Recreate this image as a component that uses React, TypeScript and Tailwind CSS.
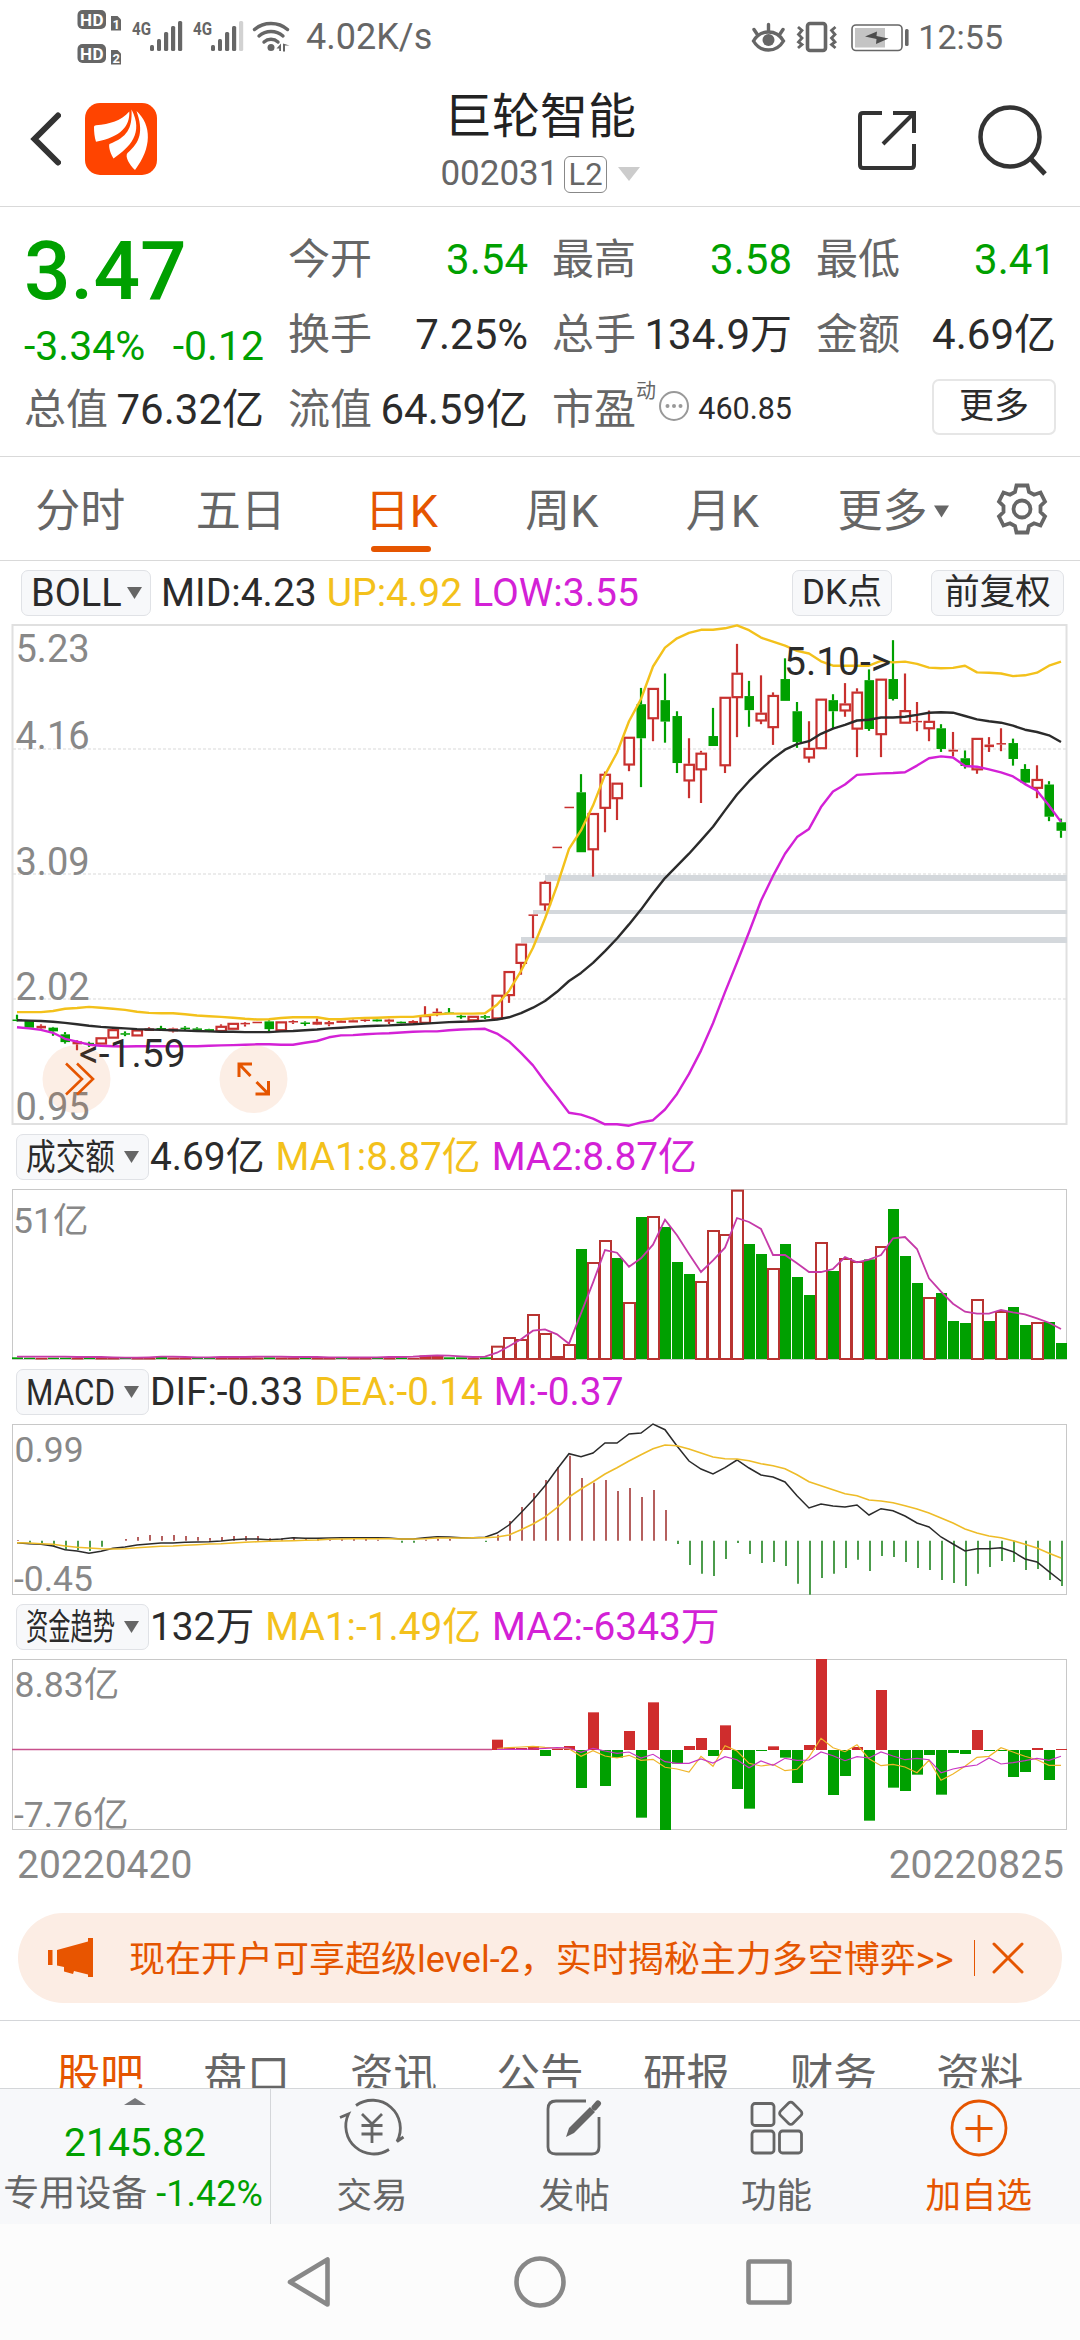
import type { ReactNode } from 'react'
import clsx from 'clsx'

const GREEN = '#00a000'
const RED = '#c8312f'
const YELLOW = '#f3c11b'
const PURPLE = '#d321d6'
const DARK = '#2b2b2b'

// x of the centre of the n-th trading day, 12px per day
const cx = (i: number) => 17 + i * 12

// price samples: 200 is the top of the plot, 1551 the bottom
const py = (v: number) => ((v - 200) * 500) / 1351 + 1
// indicator samples are stored in thirds of a pixel
const third = (base: number) => (v: number) => (v - base) / 3

const linePoints = (data: number[], y: (v: number) => number, start = 0) =>
  data.map((v, i) => `${cx(i + start)},${y(v).toFixed(1)}`).join(' ')

// [up?, high, body top, body bottom, low]
type Candle = [number, number, number, number, number]

const candles: Candle[] = [
  [0, 1253, 1266, 1270, 1271], [0, 1270, 1270, 1288, 1288], [1, 1279, 1283, 1290, 1293], [0, 1286, 1288, 1298, 1310],
  [0, 1300, 1306, 1327, 1331], [1, 1322, 1325, 1333, 1349], [0, 1326, 1329, 1332, 1340], [1, 1314, 1314, 1331, 1331],
  [1, 1292, 1292, 1315, 1315], [0, 1298, 1303, 1306, 1311], [1, 1293, 1293, 1309, 1309], [1, 1287, 1290, 1297, 1297],
  [0, 1283, 1289, 1292, 1297], [1, 1288, 1290, 1298, 1301], [0, 1284, 1288, 1291, 1295], [0, 1287, 1290, 1293, 1296],
  [0, 1291, 1292, 1298, 1300], [1, 1279, 1283, 1297, 1297], [1, 1275, 1275, 1291, 1291], [1, 1273, 1275, 1279, 1285],
  [1, 1272, 1272, 1275, 1275], [0, 1268, 1271, 1292, 1297], [1, 1271, 1271, 1295, 1295], [1, 1268, 1270, 1274, 1278],
  [0, 1271, 1274, 1277, 1283], [1, 1263, 1272, 1280, 1281], [1, 1270, 1273, 1279, 1284], [1, 1268, 1269, 1275, 1275],
  [1, 1266, 1268, 1274, 1274], [1, 1264, 1266, 1270, 1272], [0, 1265, 1266, 1271, 1272], [1, 1264, 1266, 1272, 1278],
  [0, 1271, 1272, 1275, 1276], [1, 1268, 1270, 1277, 1277], [1, 1230, 1254, 1275, 1275], [1, 1236, 1245, 1249, 1257],
  [0, 1235, 1247, 1250, 1250], [0, 1253, 1256, 1259, 1264], [1, 1256, 1256, 1268, 1268], [0, 1254, 1257, 1260, 1265],
  [1, 1199, 1199, 1263, 1263], [1, 1135, 1135, 1200, 1221], [1, 1061, 1061, 1113, 1145], [1, 982, 982, 986, 1046],
  [1, 891, 894, 955, 972], [1, 799, 799, 803, 803], [1, 691, 691, 695, 695], [0, 603, 652, 814, 814],
  [1, 708, 708, 806, 880], [1, 596, 602, 694, 760], [1, 626, 626, 668, 727], [1, 502, 502, 577, 595],
  [0, 370, 414, 506, 638], [1, 370, 370, 452, 514], [0, 331, 403, 461, 518], [0, 433, 446, 573, 600],
  [1, 506, 575, 620, 668], [1, 540, 545, 590, 681], [0, 424, 500, 527, 527], [1, 394, 394, 579, 600],
  [1, 251, 329, 395, 503], [0, 351, 392, 430, 475], [1, 336, 437, 458, 468], [1, 382, 389, 476, 524],
  [0, 290, 346, 405, 405], [0, 408, 433, 516, 532], [1, 460, 532, 558, 572], [1, 399, 399, 533, 533],
  [0, 387, 403, 433, 480], [1, 357, 412, 431, 448], [1, 371, 380, 480, 557], [0, 320, 349, 481, 486],
  [1, 345, 345, 495, 557], [0, 241, 346, 400, 404], [1, 331, 430, 464, 464], [1, 408, 459, 463, 487],
  [1, 431, 459, 479, 514], [0, 468, 479, 535, 543], [1, 489, 537, 542, 555], [0, 539, 560, 581, 588],
  [1, 505, 505, 590, 602], [1, 503, 523, 530, 543], [1, 479, 519, 523, 541], [0, 507, 519, 562, 580],
  [0, 576, 589, 626, 632], [1, 579, 616, 640, 668], [0, 622, 631, 718, 730], [0, 723, 733, 756, 775],
]

const bollUp = [
  1246, 1246, 1246, 1243, 1237, 1235, 1232, 1234, 1237, 1240, 1245, 1248, 1249, 1249, 1252, 1255, 1257, 1259, 1261, 1264,
  1266, 1265, 1262, 1260, 1260, 1260, 1265, 1265, 1263, 1262, 1261, 1260, 1259, 1259, 1255, 1252, 1250, 1250, 1250, 1249,
  1226, 1189, 1135, 1072, 993, 905, 805, 755, 688, 605, 545, 460, 400, 312, 261, 236, 221, 213, 213, 209,
  201, 214, 234, 245, 256, 270, 277, 298, 310, 310, 310, 310, 297, 301, 299, 305, 315, 317, 316, 310,
  328, 329, 331, 338, 336, 329, 310, 299,
]

const bollMid = [
  1268, 1269, 1270, 1272, 1275, 1279, 1283, 1286, 1288, 1290, 1292, 1293, 1294, 1295, 1296, 1297, 1298, 1299, 1299, 1300,
  1300, 1300, 1298, 1297, 1295, 1293, 1290, 1288, 1286, 1284, 1283, 1282, 1280, 1279, 1277, 1275, 1273, 1272, 1271, 1269,
  1266, 1260, 1249, 1234, 1216, 1191, 1162, 1140, 1113, 1081, 1047, 1009, 969, 925, 884, 851, 818, 782, 745, 701,
  658, 622, 590, 561, 537, 522, 514, 494, 480, 470, 458, 456, 450, 450, 448, 443, 437, 436, 437, 446,
  455, 460, 464, 472, 483, 489, 498, 516,
]

const bollLow = [
  1287, 1290, 1294, 1302, 1318, 1326, 1334, 1337, 1338, 1339, 1338, 1338, 1338, 1338, 1338, 1338, 1337, 1336, 1335, 1334,
  1333, 1333, 1334, 1334, 1329, 1324, 1314, 1309, 1308, 1306, 1304, 1303, 1301, 1299, 1298, 1298, 1295, 1293, 1292, 1291,
  1304, 1325, 1356, 1390, 1434, 1475, 1518, 1523, 1534, 1549, 1549, 1553, 1544, 1538, 1509, 1467, 1413, 1350, 1276, 1192,
  1112, 1030, 945, 878, 818, 773, 751, 692, 650, 631, 605, 603, 601, 600, 598, 580, 560, 555, 558, 581,
  583, 590, 598, 609, 630, 648, 688, 732,
]

// turnover bars, positive = up day, negative = down day
const turnover = [
  -709, -710, 709, -710, -710, 709, -709, 708, 708, -709, 709, 709, -708, 708, 708, -709, -710, 709, 708, 708,
  708, -709, 708, 708, -709, 708, 709, -709, 708, 708, -709, 709, -709, 709, 702, 702, -709, -709, 708, -709,
  674, 648, 654, 579, 636, 705, 669, -384, 423, 357, -411, 543, -288, 285, -318, -423, -459, 480, 327, 339,
  206, -369, -399, 441, -369, -468, -522, 363, -450, 411, 420, -415, 375, -264, -405, -486, 528, -516, -600, -606,
  534, -600, 570, -558, -612, 603, -603, -666,
]

const turnoverMa = [
  707, 707, 707, 707, 707, 708, 708, 708, 709, 710, 710, 709, 707, 707, 708, 709, 709, 708, 708, 708,
  707, 707, 707, 708, 708, 708, 709, 709, 709, 709, 709, 708, 708, 707, 705, 703, 704, 706, 708, 707,
  695, 676, 655, 629, 625, 640, 668, 577, 485, 387, 395, 437, 412, 371, 296, 343, 399, 453, 418, 380,
  291, 303, 324, 402, 402, 427, 453, 453, 444, 408, 424, 416, 402, 352, 348, 384, 472, 512, 548, 572,
  578, 578, 567, 574, 580, 592, 605, 624,
]

const macdBars = [
  1257, 1265, 1266, 1276, 1286, 1287, 1290, 1277, 1259, 1254, 1248, 1242, 1245, 1242, 1245, 1248, 1251, 1248, 1245, 1245,
  1245, 1252, 1254, 1248, 1253, 1254, 1254, 1254, 1254, 1254, 1256, 1259, 1265, 1265, 1256, 1253, 1254, 1259, 1259, 1263,
  1241, 1200, 1158, 1116, 1077, 1038, 1004, 1071, 1085, 1077, 1110, 1101, 1128, 1107, 1167, 1269, 1332, 1358, 1365, 1314,
  1266, 1299, 1326, 1323, 1335, 1388, 1421, 1371, 1358, 1341, 1316, 1350, 1305, 1308, 1323, 1341, 1347, 1377, 1386, 1395,
  1358, 1338, 1320, 1323, 1347, 1344, 1377, 1395,
]

const macdDif = [
  1265, 1268, 1270, 1275, 1286, 1290, 1297, 1291, 1282, 1278, 1272, 1269, 1266, 1266, 1264, 1263, 1262, 1260, 1256, 1254,
  1254, 1256, 1254, 1250, 1252, 1252, 1251, 1250, 1250, 1250, 1250, 1251, 1254, 1254, 1250, 1247, 1248, 1250, 1250, 1249,
  1236, 1212, 1175, 1137, 1094, 1045, 998, 1007, 996, 966, 966, 939, 936, 909, 926, 975, 1020, 1044, 1059, 1040,
  1017, 1041, 1062, 1068, 1083, 1124, 1161, 1149, 1155, 1158, 1152, 1182, 1163, 1169, 1185, 1206, 1218, 1248, 1269, 1290,
  1283, 1283, 1280, 1292, 1314, 1323, 1352, 1380,
]

const macdDea = [
  1265, 1266, 1268, 1270, 1275, 1279, 1281, 1283, 1284, 1283, 1280, 1278, 1276, 1275, 1273, 1271, 1269, 1268, 1266, 1264,
  1262, 1261, 1260, 1259, 1258, 1257, 1255, 1254, 1253, 1253, 1253, 1253, 1254, 1254, 1253, 1251, 1251, 1251, 1250, 1250,
  1248, 1242, 1226, 1209, 1188, 1160, 1128, 1104, 1082, 1059, 1040, 1020, 1001, 983, 972, 974, 984, 996, 1008, 1013,
  1014, 1019, 1028, 1034, 1043, 1061, 1082, 1094, 1106, 1118, 1124, 1137, 1140, 1145, 1154, 1164, 1176, 1191, 1206, 1224,
  1236, 1245, 1250, 1259, 1270, 1281, 1297, 1311,
]

// money flow starts to move on day 40, before that it is flat
const flowBars = [
  446, 470, 471, 466, 495, 473, 465, 591, 364, 585, 500, 420, 680, 334, 717, 518, 465, 441, 495, 403,
  594, 653, 480, 466, 500, 576, 462, 204, 612, 555, 468, 689, 297, 590, 600, 551, 492, 611, 486, 489,
  417, 480, 480, 558, 543, 471, 567, 474,
]

const flowMa1 = [
  473, 470, 468, 466, 469, 471, 473, 496, 479, 495, 501, 493, 508, 505, 529, 534, 543, 496, 526, 464,
  480, 517, 525, 520, 539, 535, 498, 442, 470, 482, 461, 503, 524, 520, 528, 545, 508, 568, 549, 526,
  499, 496, 470, 483, 496, 506, 523, 523,
]

const flowMa2 = [
  475, 475, 475, 474, 472, 470, 471, 484, 472, 480, 487, 483, 501, 490, 512, 517, 517, 504, 516, 497,
  506, 530, 510, 523, 502, 508, 507, 483, 494, 509, 497, 501, 483, 495, 506, 502, 506, 545, 534, 527,
  522, 501, 519, 515, 509, 502, 508, 496,
]

function StatusBar() {
  return (
    <div className="flex h-[74px] items-center pr-[77px] pl-[76px] text-[36px] text-[#666]">
      <svg width="216" height="74" viewBox="76 0 216 74" fill="#666" className="shrink-0">
        {[10, 44].map((y, i) => (
          <g key={y}>
            <rect x="77.5" y={y} width="28.5" height="19" rx="5" />
            <text x="80" y={y + 15.5} fontSize="17" fontWeight="700" fill="#fff" textLength="23.5">HD</text>
            <path d={`M111 ${y + 6}h6.5l3.5 3.5v11h-10z`} />
            <text x="112.6" y={y + 18.5} fontSize="13" fontWeight="700" fill="#fff" textLength="7">{i + 1}</text>
          </g>
        ))}
        {[133, 194].map((x, i) => (
          <g key={x}>
            <text x={x - 1} y="35" fontSize="19" fontWeight="700" textLength="19" lengthAdjust="spacingAndGlyphs">4G</text>
            <rect x={x + 17} y="45" width="4" height="6" rx="1.5" />
            <rect x={x + 24} y="39" width="4" height="12" rx="1.5" />
            <rect x={x + 31} y="32" width="4.2" height="19" rx="1.5" />
            <rect x={x + 38} y="26" width="4.2" height="25" rx="1.5" />
            <rect x={x + 45} y="21" width="4.2" height="30" rx="1.5" fill={i === 1 ? '#d2d2d2' : '#666'} />
          </g>
        ))}
        <g fill="none" stroke="#666" strokeWidth="3.4" strokeLinecap="round">
          <path d="M254.5 29.5c9-8 24-8 33 0" />
          <path d="M259 36c7-6 17-6 24 0" />
          <path d="M264 42c4-3.6 10-3.6 14 0" />
        </g>
        <circle cx="271" cy="47.5" r="3.5" />
        <path d="M281 43.5v7.5h-1.8v-2.5h-2.7zM283 43.5l6.5 2h-4.5v6h-2z" />
      </svg>
      <span className="ml-[14px] leading-none">4.02K/s</span>
      <svg width="160" height="40" viewBox="752 16 160 40" fill="none" stroke="#666" className="ml-auto shrink-0">
        <g strokeWidth="3.4" strokeLinecap="round">
          <path d="M754.5 40c7-12 23-12 30 0-7 12-23 12-30 0z" />
          <path d="M769.5 23.5v6M755 28.5l3 4.5M784 28.5l-3 4.5" />
        </g>
        <circle cx="769.5" cy="39" r="6" fill="#666" stroke="none" />
        <rect x="808.5" y="22.5" width="18" height="27" rx="2.5" strokeWidth="3.6" />
        <path d="M799 26l4 3.5-3.5 4 3.5 3.5-3.5 4 3.5 2.5-4 3.5M836.5 26l-4 3.5 3.5 4-3.5 3.5 3.5 4-3.5 2.5 4 3.5" strokeWidth="2.8" />
        <rect x="853" y="24" width="50" height="25.5" rx="4" strokeWidth="1.6" />
        <rect x="856" y="27" width="30" height="19.5" fill="#c4c4c4" stroke="none" />
        <path d="M866 35.5l12-5-.5 4.5 12 2.5-12.5 5.5.5-5z" fill="#4d4d4d" stroke="none" />
        <rect x="906" y="28" width="3.6" height="17" rx="1.5" fill="#666" stroke="none" />
      </svg>
      <span className="ml-[7px] text-[34px] leading-none">12:55</span>
    </div>
  )
}

function Header() {
  return (
    <div className="relative flex h-[133px] items-center border-b border-[#d9d9d9] pr-[32px] pl-[30px]">
      <svg width="31" height="54" viewBox="0 0 31 54" className="mt-[-3px]">
        <path d="M28 3.5L4.5 27 28 50.5" fill="none" stroke="#333" strokeWidth="6" strokeLinecap="round" />
      </svg>
      <svg width="72" height="72" viewBox="0 0 72 72" className="mt-[-2px] ml-[24px]">
        <rect width="72" height="72" rx="15" fill="#ff4400" />
        <g fill="#fff">
          <path d="M9 24c0-1 1-1.5 2-1.7C25 21 36 18 44.3 8.5 45 23 36 34 11 38.8 9.5 34 9 29 9 24z" />
          <path d="M46.5 6.5C47.5 26 42 34 24.5 41c-.8 1-.5 7 4 14.5C45 44 59 30 46.5 6.5z" />
          <path d="M51.5 8c7 20 4 31-9 42-3 3.5 2 12 7.5 17C67 45 67 22 51.5 8z" />
        </g>
      </svg>
      <div className="absolute inset-x-0 top-[14px] flex flex-col items-center">
        <h1 className="text-[48px] leading-[58px] text-[#222]">巨轮智能</h1>
        <div className="mt-[9px] flex h-[38px] items-center text-[35px] leading-[38px] text-[#666]">
          002031
          <span className="ml-[6px] flex h-[37px] items-center rounded-[6px] border border-[#888] px-[3px] text-[31px] leading-none">L2</span>
          <svg width="22" height="14" className="ml-[11px]"><path d="M0 0h22L11 14z" fill="#ccc" /></svg>
        </div>
      </div>
      <svg width="58" height="60" viewBox="0 0 58 60" className="ml-auto" fill="none" stroke="#333" strokeWidth="4">
        <path d="M24 3H5q-3 0-3 3v49q0 3 3 3h48q3 0 3-3V34M35 3h21v20M55 4L25 34" />
      </svg>
      <svg width="70" height="72" viewBox="0 0 70 72" className="ml-[62px]" fill="none" stroke="#333" strokeWidth="4.5">
        <circle cx="32" cy="33" r="29.5" />
        <path d="M53 55l14 15" strokeWidth="5" />
      </svg>
    </div>
  )
}

function Stat({ label, value, green }: { label: string; value: string; green?: boolean }) {
  return (
    <div className="flex h-[75px] items-center justify-between text-[42px] leading-none whitespace-nowrap">
      <span className="text-[#666]">{label}</span>
      <span className={green ? 'text-[#00a000]' : 'text-[#2b2b2b]'}>{value}</span>
    </div>
  )
}

function Quote() {
  return (
    <div className="grid h-[250px] grid-cols-4 gap-x-6 border-b border-[#d9d9d9] px-6 pt-[15px]">
      <div>
        <div className="h-[99px] text-[82px] leading-[98px] font-medium text-[#00a000]">3.47</div>
        <div className="flex h-[51px] items-center justify-between text-[41px] leading-none whitespace-nowrap text-[#00a000]">
          <span>-3.34%</span>
          <span>-0.12</span>
        </div>
        <Stat label="总值" value="76.32亿" />
      </div>
      <div>
        <Stat label="今开" value="3.54" green />
        <Stat label="换手" value="7.25%" />
        <Stat label="流值" value="64.59亿" />
      </div>
      <div>
        <Stat label="最高" value="3.58" green />
        <Stat label="总手" value="134.9万" />
        <div className="flex h-[75px] items-center leading-none text-[#666]">
          <span className="text-[42px]">市盈</span>
          <span className="mb-[37px] text-[20px]">动</span>
          <svg width="30" height="30" viewBox="0 0 30 30" className="mb-[8px] ml-[3px] shrink-0">
            <circle cx="15" cy="15" r="14" fill="none" stroke="#999" strokeWidth="2" />
            <g fill="#999">
              <circle cx="8.5" cy="15" r="2" />
              <circle cx="15" cy="15" r="2" />
              <circle cx="21.5" cy="15" r="2" />
            </g>
          </svg>
          <span className="ml-auto text-[30.5px] text-[#2b2b2b]">460.85</span>
        </div>
      </div>
      <div>
        <Stat label="最低" value="3.41" green />
        <Stat label="金额" value="4.69亿" />
        <div className="flex h-[75px] items-center justify-end">
          <button className="mb-[6px] h-[56px] w-[124px] rounded-[7px] border-2 border-[#e6e6e6] text-[35px] leading-[51px] text-[#2b2b2b]">
            更多
          </button>
        </div>
      </div>
    </div>
  )
}

function Triangle({ w = 15, h = 12 }: { w?: number; h?: number }) {
  return (
    <svg width={w} height={h} viewBox="0 0 15 12" className="shrink-0">
      <path d="M0 0h15L7.5 12z" fill="#666" />
    </svg>
  )
}

function PeriodTabs() {
  return (
    <div className="flex h-[104px] items-center border-b border-[#d9d9d9] text-[45px] leading-none text-[#666]">
      {['分时', '五日', '日K', '周K', '月K'].map((t) => (
        <div
          key={t}
          className={clsx('relative flex h-full w-[160.5px] items-center justify-center pt-[5px]', t === '日K' && 'text-[#e55500]')}
        >
          {t}
          {t === '日K' && <span className="absolute bottom-[8px] left-[50px] h-[6px] w-[60px] rounded-full bg-[#e55500]" />}
        </div>
      ))}
      <div className="ml-[35px] flex items-center pt-[5px]">
        更多
        <span className="ml-[6px]"><Triangle h={13} /></span>
      </div>
      <svg width="52" height="52" viewBox="-26 -26 52 52" className="mr-[32px] ml-auto" fill="none" stroke="#666" strokeWidth="3.8">
        <path d="M-5.5-23.5H5.5L7-17 12-14.3 18.5-16.5 23-7.5 18.5-3V3L23 7.5 18.5 16.5 12 14.3 7 17 5.5 23.5H-5.5L-7 17-12 14.3-18.5 16.5-23 7.5-18.5 3V-3L-23-7.5-18.5-16.5-12-14.3-7-17z" />
        <circle r="8.5" />
      </svg>
    </div>
  )
}

function PriceChart() {
  return (
    <svg width="1080" height="501" viewBox="0 0 1080 501" className="block overflow-visible">
      {[125, 250, 375].map((y) => (
        <line key={y} x1="13" x2="1066" y1={y} y2={y} stroke="#ececec" strokeWidth="2" strokeDasharray="3 2" />
      ))}
      <rect x="12.5" y="1" width="1054" height="499" fill="none" stroke="#e0e0e0" strokeWidth="2" />
      <g fill="#d4d8dc">
        <rect x="545" y="251" width="522" height="6" />
        <rect x="533" y="286" width="534" height="4" />
        <rect x="521" y="313" width="546" height="6" />
      </g>
      <g fill="#888" fontSize="38">
        <text x="15.5" y="38">5.23</text>
        <text x="15.5" y="125">4.16</text>
        <text x="15.5" y="251">3.09</text>
        <text x="15.5" y="376">2.02</text>
        <text x="15.5" y="496">0.95</text>
      </g>
      {candles.map(([up, high, top, bottom, low], i) => {
        const x = cx(i)
        const t = py(top)
        const b = py(bottom)
        const color = up ? RED : GREEN
        const hollow = up && b - t > 4
        return (
          <g key={i} stroke={color} strokeWidth="2.2">
            <line x1={x} x2={x} y1={py(high)} y2={t} />
            <line x1={x} x2={x} y1={b} y2={py(low)} />
            {hollow ? (
              <rect x={x - 4.5} y={t + 1} width="9.5" height={b - t - 1} fill="#fff" />
            ) : (
              <rect x={x - 4.5} y={t} width="9.5" height={Math.max(b - t, 1.5)} fill={color} stroke="none" />
            )}
          </g>
        )
      })}
      <g fill="none" strokeWidth="2.4" strokeLinejoin="round">
        <polyline points={linePoints(bollUp, py)} stroke={YELLOW} />
        <polyline points={linePoints(bollMid, py)} stroke={DARK} />
        <polyline points={linePoints(bollLow, py)} stroke={PURPLE} />
      </g>
      <g fill={DARK} fontSize="39">
        <text x="79" y="443">&lt;-1.59</text>
        <text x="784" y="51">5.10-&gt;</text>
      </g>
      <g fill="#e55500" fillOpacity="0.1">
        <circle cx="76.5" cy="455" r="34" />
        <circle cx="253.5" cy="455" r="34" />
      </g>
      <g fill="none" stroke="#e55500" strokeWidth="2.6">
        <path d="M66 439.5l16 15.5-16 15.5M77 439.5l16 15.5-16 15.5" />
        <path d="M239 453v-13h13M240 441l10.5 11M268.5 457v13h-13M267.5 469l-11-11" strokeWidth="3" />
      </g>
    </svg>
  )
}

function Panel({ children }: { children: ReactNode }) {
  return (
    <svg width="1080" height="171" viewBox="0 0 1080 171" className="block overflow-visible">
      <rect x="12.5" y="0.5" width="1054" height="170" fill="none" stroke="#c8c8c8" />
      {children}
    </svg>
  )
}

function TurnoverChart() {
  const y = third(204)
  return (
    <Panel>
      {turnover.map((v, i) => {
        const up = v > 0
        const top = y(Math.abs(v))
        if (up) {
          return <rect key={i} x={cx(i) - 5} y={top + 1} width="11" height={Math.max(170 - top - 1, 0.5)} fill={i < 40 ? RED : '#fff'} stroke="#b83431" strokeWidth={i < 40 ? 1 : 2} />
        }
        return <rect key={i} x={cx(i) - 5} y={top} width="11" height={Math.max(170 - top, 1)} fill={GREEN} />
      })}
      <polyline points={linePoints(turnoverMa, y)} fill="none" stroke="#c53aa8" strokeWidth="1.8" />
      <text x="13" y="43.5" fontSize="35.5" fill="#888">51亿</text>
    </Panel>
  )
}

function MacdChart() {
  const y = third(909)
  const zero = y(1259)
  return (
    <Panel>
      {macdBars.map((v, i) => (
        <line key={i} x1={cx(i) + 1} x2={cx(i) + 1} y1={zero} y2={y(v)} stroke={v < 1259 ? '#b5605e' : '#4c9c4c'} strokeWidth="2" />
      ))}
      <polyline points={linePoints(macdDif, y)} fill="none" stroke={DARK} strokeWidth="1.5" />
      <polyline points={linePoints(macdDea, y)} fill="none" stroke="#eebc28" strokeWidth="1.6" />
      <g fontSize="35.5" fill="#888">
        <text x="14.5" y="38">0.99</text>
        <text x="14" y="166.5">-0.45</text>
      </g>
    </Panel>
  )
}

function FlowChart() {
  const y = third(204)
  const zero = y(477)
  return (
    <Panel>
      <line x1="12" x2="492" y1={zero - 0.5} y2={zero - 0.5} stroke="#c8508c" strokeWidth="1.4" />
      {flowBars.map((v, i) => (
        <rect
          key={i}
          x={cx(i + 40) - 5}
          y={Math.min(y(v), zero)}
          width="11"
          height={Math.abs(y(v) - zero)}
          fill={v < 477 ? '#cf2d2d' : GREEN}
        />
      ))}
      <polyline points={linePoints(flowMa1, y, 40)} fill="none" stroke="#efb52a" strokeWidth="1.2" />
      <polyline points={linePoints(flowMa2, y, 40)} fill="none" stroke="#c936c4" strokeWidth="1.2" />
      <g fontSize="35.5" fill="#888">
        <text x="14.5" y="38">8.83亿</text>
        <text x="14" y="168">-7.76亿</text>
      </g>
    </Panel>
  )
}

const pill = 'flex items-center rounded-[7px] border border-[#e0e2e6] bg-[#f7f8fa] leading-none whitespace-nowrap text-[#2b2b2b]'

function IndicatorRow({ name, values }: { name: string; values: string[] }) {
  return (
    <div className="flex h-[64px] items-center pl-4 leading-none">
      <div className={clsx(pill, 'h-[46px] w-[133px] pr-[9px] pl-[9px]')}>
        <svg width="88" height="44" viewBox="0 0 88 44" className="shrink-0 overflow-visible">
          <text x="0" y="34.5" fontSize="36" fill={DARK} textLength="89" lengthAdjust="spacingAndGlyphs">{name}</text>
        </svg>
        <span className="ml-auto"><Triangle /></span>
      </div>
      <div className="ml-[1px] flex gap-[11px] text-[38.8px] whitespace-nowrap">
        <span className="text-[#2b2b2b]">{values[0]}</span>
        <span className="text-[#f3c11b]">{values[1]}</span>
        <span className="text-[#d321d6]">{values[2]}</span>
      </div>
    </div>
  )
}

function Charts() {
  return (
    <div>
      <div className="flex h-[63px] items-center pr-[16px] pl-[21px] leading-none">
        <div className={clsx(pill, 'h-[46px] w-[130px] justify-between pr-[8px] pl-[9px] text-[38px]')}>
          BOLL
          <Triangle />
        </div>
        <div className="ml-[10px] flex gap-[10px] pt-[2px] text-[39px] whitespace-nowrap">
          <span className="text-[#2b2b2b]">MID:4.23</span>
          <span className="text-[#f3c11b]">UP:4.92</span>
          <span className="text-[#d321d6]">LOW:3.55</span>
        </div>
        <div className={clsx(pill, 'ml-auto h-[46px] w-[100px] justify-center text-[35px]')}>DK点</div>
        <div className={clsx(pill, 'ml-[39px] h-[46px] w-[133px] justify-center text-[35.5px]')}>前复权</div>
      </div>
      <PriceChart />
      <IndicatorRow name="成交额" values={['4.69亿', 'MA1:8.87亿', 'MA2:8.87亿']} />
      <TurnoverChart />
      <IndicatorRow name="MACD" values={['DIF:-0.33', 'DEA:-0.14', 'M:-0.37']} />
      <MacdChart />
      <IndicatorRow name="资金趋势" values={['132万', 'MA1:-1.49亿', 'MA2:-6343万']} />
      <FlowChart />
      <div className="flex h-[70px] items-center justify-between pr-[16px] pl-[17px] text-[39px] leading-none text-[#888]">
        <span>20220420</span>
        <span>20220825</span>
      </div>
    </div>
  )
}

function Banner() {
  return (
    <div className="mx-[18px] mt-[13px] flex h-[90px] items-center rounded-full bg-[#fcede4] pr-[38px] pl-[30px] text-[36px] leading-none text-[#e55500]">
      <svg width="46" height="40" viewBox="0 0 46 40" fill="#e85500">
        <path d="M0 12h4.5v15H0zM9 12L40 3.5V0h5v39h-5v-2.5L26 33l-1 3-9-2.5V29L9 27.5z" />
      </svg>
      <span className="ml-[35px] pt-[3px] whitespace-nowrap">现在开户可享超级level-2，实时揭秘主力多空博弈&gt;&gt;</span>
      <span className="ml-auto h-[36px] w-px bg-[#e55500]" />
      <svg width="32" height="32" viewBox="0 0 32 32" className="ml-[17px] shrink-0" stroke="#e55500" strokeWidth="3" strokeLinecap="round">
        <path d="M2 2l28 28M30 2L2 30" />
      </svg>
    </div>
  )
}

function SectionTabs() {
  return (
    <div className="mt-[17px] flex h-[69px] overflow-hidden border-y border-[#d4d6d9] px-[27px] pt-[25px] text-[43.5px] leading-[60px] text-[#666]">
      {['股吧', '盘口', '资讯', '公告', '研报', '财务', '资料'].map((t, i) => (
        <span key={t} className={clsx('flex-1 text-center', i === 0 && 'text-[#e55500]')}>{t}</span>
      ))}
    </div>
  )
}

const actions = [
  {
    label: '交易',
    icon: (
      <g>
        <path d="M18 8.5A28 28 0 0 1 59 44.5l6.5-4.500M2 20.5l8.500-3.500A28 28 0 0 0 51 52.500" />
        <path d="M24 17l10 10 10-10M34 27v19M23.5 28.5h21M23.5 37h21" />
      </g>
    ),
  },
  {
    label: '发帖',
    icon: (
      <g>
        <path d="M46 4H16q-8 0-8 8v38q0 7 8 7h36q7 0 7-7V20" />
        <path d="M26 40l3-9L50 10l5 5-21 21z" fill="#666" stroke="none" />
        <path d="M54.5 10.500l3.500-4" strokeWidth="6" strokeLinecap="round" />
      </g>
    ),
  },
  {
    label: '功能',
    icon: (
      <g>
        <rect x="9" y="6.5" width="22" height="22" rx="3" />
        <rect x="9" y="34" width="22" height="22" rx="3" />
        <rect x="36.5" y="34" width="22" height="22" rx="3" />
        <rect x="39" y="7.5" width="17.5" height="17.5" rx="3" transform="rotate(45 47.75 16.25)" />
      </g>
    ),
  },
  {
    label: '加自选',
    icon: (
      <g>
        <circle cx="34" cy="31" r="27" />
        <path d="M34 18v27M20.5 31.5h27" />
      </g>
    ),
  },
]

function BottomBar() {
  return (
    <div className="flex h-[135px] bg-[#f7f8fa] text-[#666]">
      <div className="flex w-[271px] flex-col items-center border-r border-[#d4d6d9] pt-[9px]">
        <svg width="22" height="7"><path d="M0 7L11 0l11 7z" fill="#77787b" /></svg>
        <div className="mt-[15px] text-[39px] leading-[46px] text-[#00a000]">2145.82</div>
        <div className="mt-[5px] mr-[4px] flex items-center gap-[9px] text-[36px] leading-[46px] whitespace-nowrap">
          专用设备 <span className="text-[#00a000]">-1.42%</span>
        </div>
      </div>
      {actions.map((a) => {
        const active = a.label === '加自选'
        return (
          <div key={a.label} className={clsx('flex flex-1 flex-col items-center pt-[8px]', active && 'text-[#e55500]')}>
            <svg width="68" height="62" viewBox="0 0 68 62" fill="none" stroke="currentColor" strokeWidth="2.8">
              {a.icon}
            </svg>
            <span className="mt-[15px] text-[35.5px] leading-[44px]">{a.label}</span>
          </div>
        )
      })}
    </div>
  )
}

function NavBar() {
  return (
    <div className="flex h-[116px] items-center bg-[#fcfcfc] pl-[286px]">
      <svg width="508" height="52" viewBox="286 0 508 52" fill="none" stroke="#888" strokeWidth="4.6" strokeLinejoin="round">
        <path d="M327.5 3.5v45L290 26z" />
        <circle cx="540" cy="26" r="23.5" />
        <rect x="748.5" y="5.5" width="41" height="41" rx="1.5" />
      </svg>
    </div>
  )
}

export default function App() {
  return (
    <div className="h-[2340px] w-[1080px] overflow-hidden bg-white font-['Roboto','Noto_Sans_CJK_SC',sans-serif]">
      <StatusBar />
      <Header />
      <Quote />
      <PeriodTabs />
      <Charts />
      <Banner />
      <SectionTabs />
      <BottomBar />
      <NavBar />
    </div>
  )
}
